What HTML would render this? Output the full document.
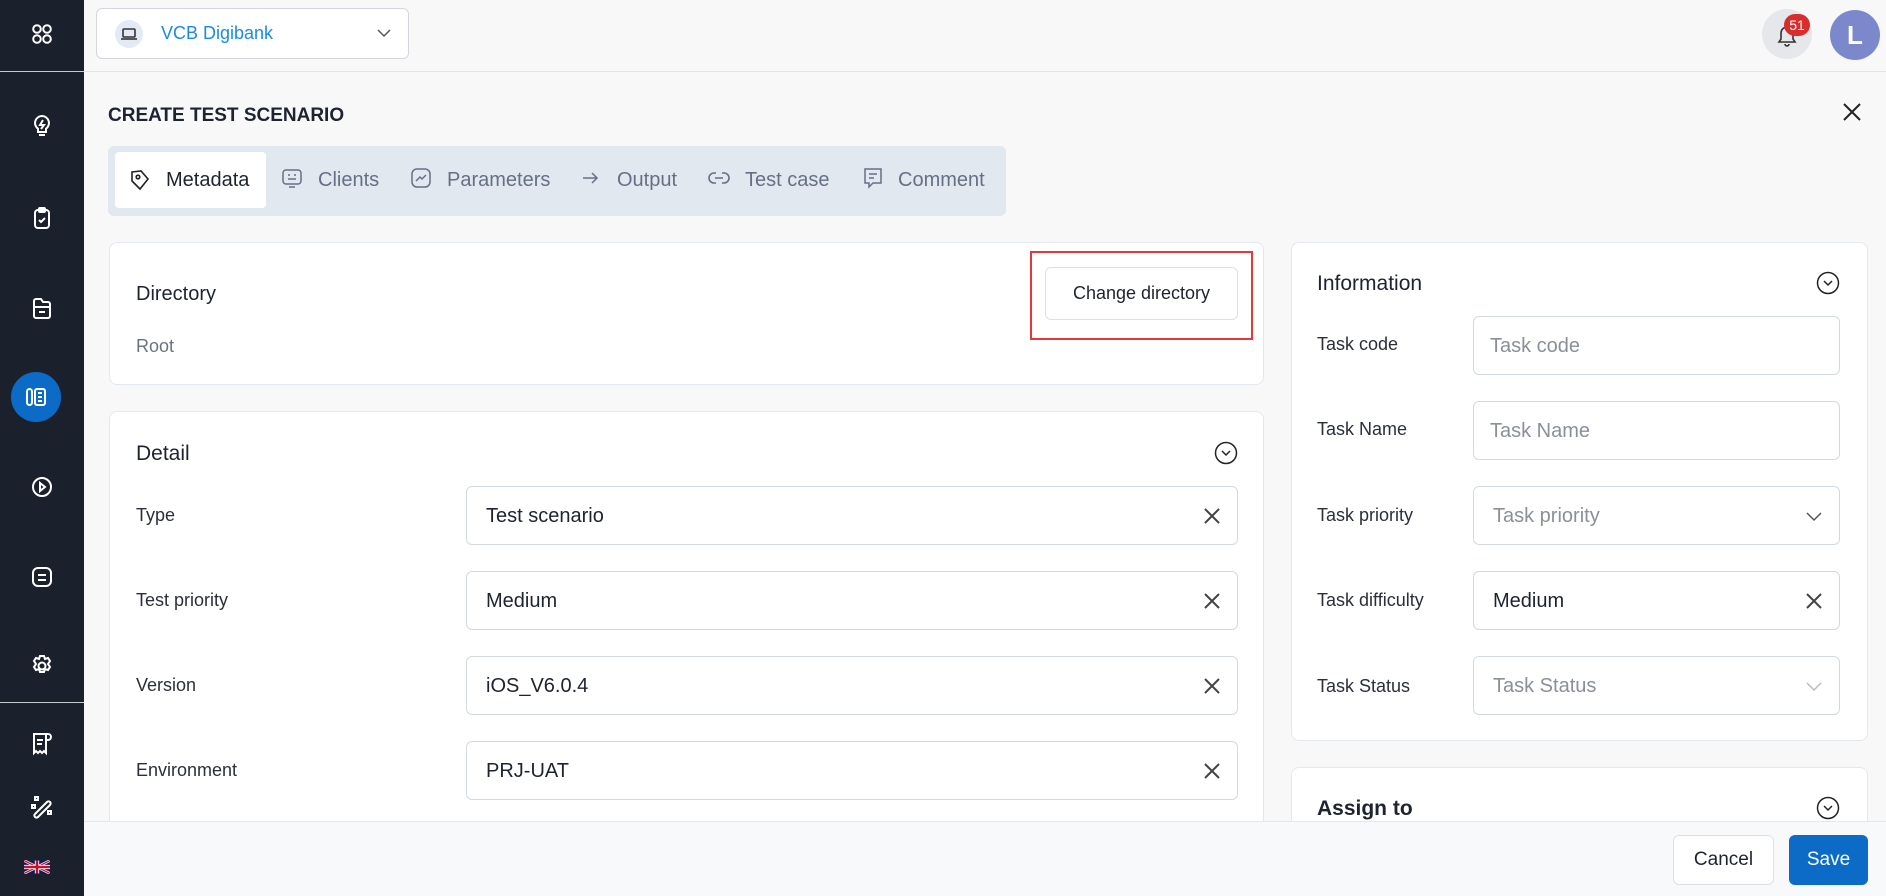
<!DOCTYPE html>
<html><head><meta charset="utf-8"><style>
*{box-sizing:border-box;margin:0;padding:0}
body{width:1886px;height:896px;overflow:hidden;background:#f8f8f9;font-family:"Liberation Sans",sans-serif;color:#1e2330;position:relative}
.abs{position:absolute}
.side{left:0;top:0;width:84px;height:896px;background:#1b212c}
.side .ic{position:absolute;left:27px;width:30px;height:30px}
.hline{position:absolute;left:0;width:84px;height:1px;background:#c8ccd2}
.top{left:84px;top:0;right:0;height:72px;border-bottom:1px solid #e1e3e6;background:#f8f8f9}
.card{background:#fff;border:1px solid #e3e8ef;border-radius:8px}
.lbl{font-size:18px;color:#2a2f3a}
.inp{position:absolute;background:#fff;border:1px solid #d3d9e3;border-radius:6px;height:59px;font-size:20px;padding-left:19px;line-height:59px;color:#1e2330}
.ph{color:#8a8f98}
.x{position:absolute;right:16px;top:20px;width:18px;height:18px}
.tab{position:absolute;top:152px;height:56px;font-size:20px;color:#667085;line-height:56px}
</style></head><body>
<div class="abs side">
<svg class="ic" style="top:19px" viewBox="0 0 30 30" fill="none" stroke="#fff" stroke-width="2"><circle cx="10" cy="10" r="3.8"/><circle cx="20" cy="10" r="3.8"/><circle cx="10" cy="20" r="3.8"/><circle cx="20" cy="20" r="3.8"/></svg>
<div class="hline" style="top:71px"></div>
<svg class="ic" style="top:111px" viewBox="0 0 30 30" fill="none" stroke="#fff" stroke-width="2"><path d="M15 5a7 7 0 0 0-4 12.7V21h8v-3.3A7 7 0 0 0 15 5z"/><path d="M12 24h6M16 9l-3 5h4l-3 4"/></svg>
<svg class="ic" style="top:203px" viewBox="0 0 30 30" fill="none" stroke="#fff" stroke-width="2"><rect x="8" y="7" width="14" height="18" rx="3"/><rect x="12" y="5" width="6" height="4" rx="1"/><path d="M12 17l2 2 4-4"/></svg>
<svg class="ic" style="top:293px" viewBox="0 0 30 30" fill="none" stroke="#fff" stroke-width="2"><path d="M7 10V8a2 2 0 0 1 2-2h5l2 3h5a2 2 0 0 1 2 2v12a2 2 0 0 1-2 2H9a2 2 0 0 1-2-2z"/><path d="M7 14h16M12 19h6"/></svg>
<div class="abs" style="left:11px;top:372px;width:50px;height:50px;border-radius:50%;background:#0b6bc7"></div>
<svg class="ic" style="top:382px;left:21px" viewBox="0 0 30 30" fill="none" stroke="#fff" stroke-width="2"><rect x="6" y="7" width="5" height="16" rx="2.5"/><rect x="14" y="7" width="10" height="16" rx="2"/><path d="M17 11h4M17 15h4M17 19h4"/></svg>
<svg class="ic" style="top:472px" viewBox="0 0 30 30" fill="none" stroke="#fff" stroke-width="2"><circle cx="15" cy="15" r="9"/><path d="M13 11l5 4-5 4z"/></svg>
<svg class="ic" style="top:562px" viewBox="0 0 30 30" fill="none" stroke="#fff" stroke-width="2"><rect x="6" y="6" width="18" height="18" rx="5"/><path d="M11 13h8M11 18h8"/></svg>
<svg class="ic" style="top:651px" viewBox="0 0 30 30" fill="none" stroke="#fff" stroke-width="2"><circle cx="15" cy="15" r="3.5"/><path d="M13 5h4l1 3 3-1 2 3-2 3 2 3-2 3-3-1-1 3h-4l-1-3-3 1-2-3 2-3-2-3 2-3 3 1z"/></svg>
<div class="hline" style="top:702px"></div>
<svg class="ic" style="top:728px" viewBox="0 0 30 30" fill="none" stroke="#fff" stroke-width="2"><path d="M7 6h12v19l-2-2-2 2-2-2-2 2-2-2-2 2z"/><path d="M19 6h2a3 3 0 0 1 0 6h-2M10 12h6M10 16h5"/></svg>
<svg class="ic" style="top:791px" viewBox="0 0 30 30" fill="none" stroke="#fff" stroke-width="2"><path d="M8 23l12-12a2 2 0 0 1 3 3L11 26a2 2 0 0 1-3-3z"/><rect x="8" y="6" width="3" height="3"/><rect x="21" y="20" width="3" height="3"/><rect x="5" y="14" width="3" height="3"/></svg>
<svg class="abs" style="left:24px;top:860px" width="26" height="14" viewBox="0 0 60 30"><rect width="60" height="30" fill="#012169"/><path d="M0 0l60 30M60 0L0 30" stroke="#fff" stroke-width="6"/><path d="M0 0l60 30M60 0L0 30" stroke="#C8102E" stroke-width="3"/><path d="M30 0v30M0 15h60" stroke="#fff" stroke-width="10"/><path d="M30 0v30M0 15h60" stroke="#C8102E" stroke-width="6"/></svg>
</div>
<div class="abs top"></div>
<div class="abs" style="left:96px;top:8px;width:313px;height:51px;border:1px solid #d3d7dd;border-radius:6px;background:#fff"></div>
<div class="abs" style="left:115px;top:20px;width:28px;height:28px;border-radius:50%;background:#e3eaf6"></div>
<svg class="abs" style="left:119px;top:24px" width="20" height="20" viewBox="0 0 20 20" fill="none" stroke="#333" stroke-width="1.6"><rect x="4" y="5" width="12" height="8" rx="1"/><path d="M2 15h16"/></svg>
<div class="abs" style="left:161px;top:23px;font-size:18px;color:#1a8ae6">VCB Digibank</div>
<svg class="abs" style="left:377px;top:28px" width="14" height="10" viewBox="0 0 14 10" fill="none" stroke="#555" stroke-width="1.5"><path d="M1 2l6 6 6-6"/></svg>
<div class="abs" style="left:1762px;top:9px;width:50px;height:50px;border-radius:50%;background:#e5e7eb"></div>
<svg class="abs" style="left:1775px;top:22px" width="24" height="26" viewBox="0 0 24 26" fill="none" stroke="#333" stroke-width="1.6"><path d="M6 17V11a6 6 0 0 1 12 0v6l2 3H4z"/><path d="M10 22a2 2 0 0 0 4 0"/></svg>
<div class="abs" style="left:1784px;top:14px;width:26px;height:22px;border-radius:11px;background:#d92d2d;color:#fff;font-size:14px;text-align:center;line-height:22px">51</div>
<div class="abs" style="left:1830px;top:10px;width:50px;height:50px;border-radius:50%;background:#7b89cc;color:#fff;font-size:26px;font-weight:bold;text-align:center;line-height:50px">L</div>
<div class="abs" style="left:108px;top:105px;font-size:19px;font-weight:bold;color:#1e2330">CREATE TEST SCENARIO</div>
<svg class="abs" style="left:1842px;top:102px" width="20" height="20" viewBox="0 0 20 20" stroke="#222" stroke-width="2"><path d="M2 2l16 16M18 2L2 18"/></svg>
<div class="abs" style="left:108px;top:146px;width:898px;height:70px;border-radius:6px;background:#e2e8f0"></div>
<div class="abs" style="left:115px;top:152px;width:151px;height:56px;border-radius:4px;background:#fff"></div>
<svg class="abs" style="left:129px;top:168px" width="22" height="24" viewBox="0 0 22 24" fill="none" stroke="#222" stroke-width="1.6"><path d="M3 4l9-1 7 8-8 10-8-8z"/><circle cx="9" cy="9" r="1.8"/></svg>
<div class="tab" style="left:166px;color:#1e2330">Metadata</div>
<svg class="abs" style="left:281px;top:167px" width="22" height="22" viewBox="0 0 22 22" fill="none" stroke="#667085" stroke-width="1.5"><rect x="2" y="3" width="18" height="14" rx="3"/><path d="M7 8h2M13 8h2M7 12h8M8 20h6"/></svg>
<div class="tab" style="left:318px">Clients</div>
<svg class="abs" style="left:410px;top:167px" width="22" height="22" viewBox="0 0 22 22" fill="none" stroke="#667085" stroke-width="1.5"><rect x="2" y="2" width="18" height="18" rx="5"/><path d="M6 14l4-4 2 2 4-4"/></svg>
<div class="tab" style="left:447px">Parameters</div>
<svg class="abs" style="left:581px;top:168px" width="22" height="20" viewBox="0 0 22 20" fill="none" stroke="#667085" stroke-width="1.5"><path d="M2 10h14M11 5l5 5-5 5"/></svg>
<div class="tab" style="left:617px">Output</div>
<svg class="abs" style="left:707px;top:168px" width="24" height="20" viewBox="0 0 24 20" fill="none" stroke="#667085" stroke-width="1.6"><path d="M9 5H7a5 5 0 0 0 0 10h2M15 5h2a5 5 0 0 1 0 10h-2M8 10h8"/></svg>
<div class="tab" style="left:745px">Test case</div>
<svg class="abs" style="left:862px;top:166px" width="22" height="24" viewBox="0 0 22 24" fill="none" stroke="#667085" stroke-width="1.5"><path d="M3 3h16v14h-8l-4 4v-4H3z"/><path d="M7 8h8M7 12h5"/></svg>
<div class="tab" style="left:898px">Comment</div>

<div class="abs card" style="left:109px;top:242px;width:1155px;height:143px"></div>
<div class="abs" style="left:136px;top:283px;font-size:20px;color:#1e2330">Directory</div>
<div class="abs" style="left:136px;top:336px;font-size:18px;color:#6b7280">Root</div>
<div class="abs" style="left:1030px;top:251px;width:223px;height:89px;border:2px solid #e03a3a"></div>
<div class="abs" style="left:1045px;top:267px;width:193px;height:53px;border:1px solid #dde1e6;border-radius:6px;background:#fff;font-size:18px;text-align:center;line-height:51px">Change directory</div>

<div class="abs card" style="left:109px;top:411px;width:1155px;height:480px"></div>
<div class="abs" style="left:136px;top:442px;font-size:21px;color:#1e2330">Detail</div>
<svg class="abs" style="left:1214px;top:441px" width="24" height="24" viewBox="0 0 24 24" fill="none" stroke="#222" stroke-width="1.5"><circle cx="12" cy="12" r="10.5"/><path d="M8 10l4 4 4-4"/></svg>
<div class="abs lbl" style="left:136px;top:505px">Type</div>
<div class="abs lbl" style="left:136px;top:590px">Test priority</div>
<div class="abs lbl" style="left:136px;top:675px">Version</div>
<div class="abs lbl" style="left:136px;top:760px">Environment</div>
<div class="inp" style="left:466px;top:486px;width:772px">Test scenario<svg class="x" viewBox="0 0 18 18" stroke="#444" stroke-width="2"><path d="M2 2l14 14M16 2L2 16"/></svg></div>
<div class="inp" style="left:466px;top:571px;width:772px">Medium<svg class="x" viewBox="0 0 18 18" stroke="#444" stroke-width="2"><path d="M2 2l14 14M16 2L2 16"/></svg></div>
<div class="inp" style="left:466px;top:656px;width:772px">iOS_V6.0.4<svg class="x" viewBox="0 0 18 18" stroke="#444" stroke-width="2"><path d="M2 2l14 14M16 2L2 16"/></svg></div>
<div class="inp" style="left:466px;top:741px;width:772px">PRJ-UAT<svg class="x" viewBox="0 0 18 18" stroke="#444" stroke-width="2"><path d="M2 2l14 14M16 2L2 16"/></svg></div>

<div class="abs card" style="left:1291px;top:242px;width:577px;height:499px"></div>
<div class="abs" style="left:1317px;top:272px;font-size:21px;color:#1e2330">Information</div>
<svg class="abs" style="left:1816px;top:271px" width="24" height="24" viewBox="0 0 24 24" fill="none" stroke="#222" stroke-width="1.5"><circle cx="12" cy="12" r="10.5"/><path d="M8 10l4 4 4-4"/></svg>
<div class="abs lbl" style="left:1317px;top:334px">Task code</div>
<div class="abs lbl" style="left:1317px;top:419px">Task Name</div>
<div class="abs lbl" style="left:1317px;top:505px">Task priority</div>
<div class="abs lbl" style="left:1317px;top:590px">Task difficulty</div>
<div class="abs lbl" style="left:1317px;top:676px">Task Status</div>
<div class="inp ph" style="left:1473px;top:316px;width:367px;padding-left:16px">Task code</div>
<div class="inp ph" style="left:1473px;top:401px;width:367px;padding-left:16px">Task Name</div>
<div class="inp ph" style="left:1473px;top:486px;width:367px">Task priority<svg class="x" viewBox="0 0 18 18" fill="none" stroke="#555" stroke-width="1.5"><path d="M2 6l7 7 7-7"/></svg></div>
<div class="inp" style="left:1473px;top:571px;width:367px">Medium<svg class="x" viewBox="0 0 18 18" stroke="#444" stroke-width="2"><path d="M2 2l14 14M16 2L2 16"/></svg></div>
<div class="inp ph" style="left:1473px;top:656px;width:367px">Task Status<svg class="x" viewBox="0 0 18 18" fill="none" stroke="#bbb" stroke-width="1.5"><path d="M2 6l7 7 7-7"/></svg></div>

<div class="abs card" style="left:1291px;top:767px;width:577px;height:120px"></div>
<div class="abs" style="left:1317px;top:797px;font-size:21px;font-weight:bold;color:#1e2330">Assign to</div>
<svg class="abs" style="left:1816px;top:796px" width="24" height="24" viewBox="0 0 24 24" fill="none" stroke="#222" stroke-width="1.5"><circle cx="12" cy="12" r="10.5"/><path d="M8 10l4 4 4-4"/></svg>

<div class="abs" style="left:84px;top:821px;right:0;bottom:0;background:#f8f9fa;border-top:1px solid #e3e8ef"></div>
<div class="abs" style="left:1673px;top:835px;width:101px;height:50px;border:1px solid #dde1e6;border-radius:6px;background:#fff;font-size:19px;text-align:center;line-height:48px">Cancel</div>
<div class="abs" style="left:1789px;top:835px;width:79px;height:50px;border-radius:6px;background:#0b6bc7;color:#fff;font-size:19px;text-align:center;line-height:50px">Save</div>
</body></html>
